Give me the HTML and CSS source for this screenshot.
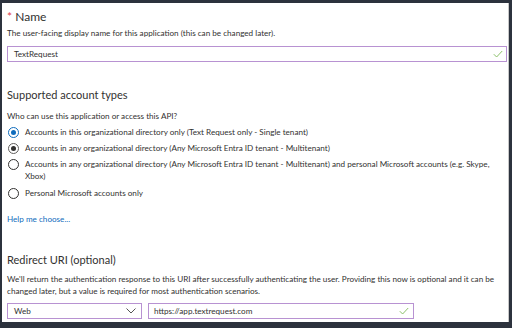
FILE: index.html
```html
<!DOCTYPE html>
<html>
<head>
<meta charset="utf-8">
<link rel="stylesheet" href="styles.css">
</head>
<body>
<div class="frame">
  <div class="panel">
    <div class="label"><span class="req">*</span> Name</div>
    <div class="desc">The user-facing display name for this application (this can be changed later).</div>
    <div class="input name-input">
      <span>TextRequest</span>
      <svg class="check" width="10" height="8" viewBox="0 0 10 8"><path d="M0.8 4.2 L3.6 7 L9.2 1" fill="none" stroke="#8cc06a" stroke-width="1"/></svg>
    </div>

    <div class="section-title acct">Supported account types</div>
    <div class="desc who">Who can use this application or access this API?</div>
    <div class="radios">
      <div class="radio-row"><span class="radio sel"></span><span class="rtext">Accounts in this organizational directory only (Text Request only - Single tenant)</span></div>
      <div class="radio-row"><span class="radio focus"></span><span class="rtext">Accounts in any organizational directory (Any Microsoft Entra ID tenant - Multitenant)</span></div>
      <div class="radio-row"><span class="radio"></span><span class="rtext">Accounts in any organizational directory (Any Microsoft Entra ID tenant - Multitenant) and personal Microsoft accounts (e.g. Skype, Xbox)</span></div>
      <div class="radio-row last"><span class="radio"></span><span class="rtext">Personal Microsoft accounts only</span></div>
    </div>
    <div class="help">Help me choose...</div>

    <div class="section-title redirect">Redirect URI (optional)</div>
    <div class="desc wrap">We'll return the authentication response to this URI after successfully authenticating the user. Providing this now is optional and it can be changed later, but a value is required for most authentication scenarios.</div>
    <div class="uri-row">
      <div class="input select">
        <span>Web</span>
        <svg width="10" height="6" viewBox="0 0 10 6"><path d="M0.5 0.5 L5 5 L9.5 0.5" fill="none" stroke="#555" stroke-width="1"/></svg>
      </div>
      <div class="input uri">
        <span>https://app.textrequest.com</span>
        <svg class="check" width="10" height="8" viewBox="0 0 10 8"><path d="M0.8 4.2 L3.6 7 L9.2 1" fill="none" stroke="#8cc06a" stroke-width="1"/></svg>
      </div>
    </div>
  </div>
</div>
</body>
</html>
```

FILE: styles.css
```css
* { box-sizing: border-box; }
html, body { margin: 0; padding: 0; }
body {
  width: 512px; height: 328px;
  background: #2c323d;
  font-family: Lato, "Open Sans", sans-serif;
  color: #323130;
  overflow: hidden;
}
.frame {
  padding: 3px 3px 6px 2px;
  height: 328px;
}
.panel {
  background: #fff;
  height: 319px;
  border-right: 1px solid #c8c8c8;
  padding: 6px 1px 0 3px;
}
.label {
  font-size: 12px;
  line-height: 16px;
  margin-left: 2px;
}
.req { color: #e0404a; }
.desc {
  font-size: 8.15px;
  line-height: 12px;
  color: #323130;
  margin-left: 2px;
}
.label + .desc { margin-top: 2px; }
.input {
  border: 1px solid #b892d2;
  height: 16px;
  display: flex;
  align-items: center;
  justify-content: space-between;
  padding: 0 3px 0 6px;
  font-size: 8.15px;
  color: #323130;
}
.name-input { margin-top: 7px; }
.section-title {
  font-size: 11px;
  line-height: 14px;
  margin-left: 2px;
}
.acct { margin-top: 26px; }
.who { margin-top: 8px; }
.radios { margin-top: 4px; display: flex; flex-direction: column; gap: 4px; }
.radio-row { display: flex; align-items: flex-start; gap: 6px; }
.radio-row.last { margin-top: 1px; }
.radio {
  flex: none;
  width: 11px; height: 11px;
  border-radius: 50%;
  border: 1px solid #323130;
  margin-top: 0.5px;
  margin-left: 3px;
  position: relative;
  background: #fff;
}
.radio.sel { border-color: #0f6cbd; }
.radio.sel::after, .radio.focus::after {
  content: ""; position: absolute;
  left: 2px; top: 2px; width: 5px; height: 5px; border-radius: 50%;
  background: #0f6cbd;
}
.radio.focus { border-color: #605e5c; }
.radio.focus::after { background: #323130; }
.rtext { font-size: 8.15px; line-height: 12px; padding-right: 4px; }
.help { font-size: 8.15px; color: #0f6cbd; margin-top: 14px; line-height: 12px; margin-left: 2px; }
.redirect { margin-top: 28px; }
.wrap { margin-top: 6px; padding-right: 6px; }
.uri-row { display: flex; gap: 6px; margin-top: 6px; margin-left: 2px; }
.select { width: 135px; padding-right: 5px; }
.uri { width: 266px; padding-right: 4px; padding-left: 5px; }
.name-input { margin-left: 2px; }
```
